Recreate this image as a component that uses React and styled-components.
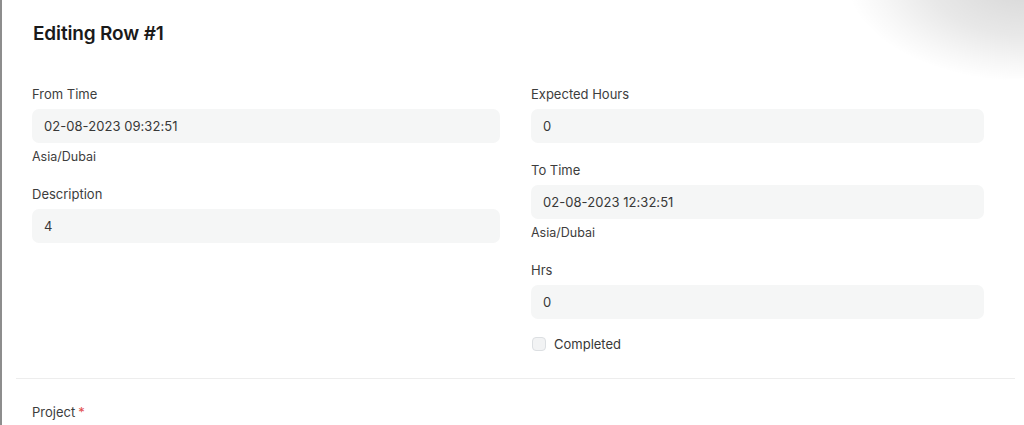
import React from "react";
import styled, { createGlobalStyle } from "styled-components";

const Global = createGlobalStyle`
  html, body { margin: 0; padding: 0; background: #fff; }
  body { font-family: Inter, "Noto Sans", sans-serif; color: #383838; -webkit-font-smoothing: antialiased; }
  * { box-sizing: border-box; }
`;

const Page = styled.div`
  position: relative;
  width: 1024px;
  height: 425px;
  overflow: hidden;
  background: #fff;
  border-left: 2px solid #8d8d8d;
`;

const Shade = styled.div`
  position: absolute;
  top: -105px;
  right: -115px;
  width: 290px;
  height: 185px;
  border-radius: 50%;
  background: radial-gradient(ellipse at 62% 45%, rgba(0,0,0,0.17) 0%, rgba(0,0,0,0.09) 40%, rgba(0,0,0,0.03) 60%, rgba(0,0,0,0) 72%);
  pointer-events: none;
`;

const Header = styled.div`
  padding: 21px 30px 0 31px;
  height: 68px;
`;

const Title = styled.h4`
  margin: 0;
  font-size: 19px;
  line-height: 26px;
  font-weight: 600;
  color: #1a1a1a;
  letter-spacing: -0.15px;
`;

const Body = styled.div`
  padding: 17px 9px 0 14px;
`;

const Section = styled.div`
  display: grid;
  grid-template-columns: 468px 453px;
  column-gap: 31px;
  padding: 0 0 26px 16px;
  border-bottom: 1px solid #ededed;
`;

const Column = styled.div`
  display: flex;
  flex-direction: column;
`;

const Field = styled.div`
  margin-bottom: ${(p) => (p.$tight ? "0" : "18px")};
`;

const Label = styled.div`
  font-size: 13px;
  line-height: 18px;
  color: #3d3d3d;
  margin-bottom: 6px;
`;

const Req = styled.span`
  color: #e24c4c;
  margin-left: 3px;
`;

const Input = styled.div`
  height: 34px;
  background: #f5f6f6;
  border-radius: 7px;
  padding: 0 12px;
  display: flex;
  align-items: center;
  font-size: 13px;
  color: #383838;
  letter-spacing: 0.05px;
`;

const Help = styled.div`
  font-size: 12.5px;
  line-height: 18px;
  margin-top: 5px;
  margin-bottom: 1px;
  color: #3d3d3d;
`;

const CheckRow = styled.label`
  display: flex;
  align-items: center;
  gap: 8px;
  height: 16px;
  margin-top: -1px;
  font-size: 13px;
  color: #383838;
  padding-left: 1px;
`;

const Box = styled.span`
  width: 14px;
  height: 14px;
  border-radius: 4px;
  border: 1px solid #dcdfe2;
  background: #f2f3f4;
`;

const Lower = styled.div`
  padding: 24px 0 0 16px;
`;

export default function App() {
  return (
    <>
      <Global />
      <Page>
        <Shade />
        <Header>
          <Title>Editing Row #1</Title>
        </Header>
        <Body>
          <Section>
            <Column>
              <Field>
                <Label>From Time</Label>
                <Input>02-08-2023 09:32:51</Input>
                <Help>Asia/Dubai</Help>
              </Field>
              <Field>
                <Label>Description</Label>
                <Input>4</Input>
              </Field>
            </Column>
            <Column>
              <Field>
                <Label>Expected Hours</Label>
                <Input>0</Input>
              </Field>
              <Field>
                <Label>To Time</Label>
                <Input>02-08-2023 12:32:51</Input>
                <Help>Asia/Dubai</Help>
              </Field>
              <Field>
                <Label>Hrs</Label>
                <Input>0</Input>
              </Field>
              <Field $tight>
                <CheckRow>
                  <Box />
                  Completed
                </CheckRow>
              </Field>
            </Column>
          </Section>
          <Lower>
            <Label>
              Project<Req>*</Req>
            </Label>
          </Lower>
        </Body>
      </Page>
    </>
  );
}
